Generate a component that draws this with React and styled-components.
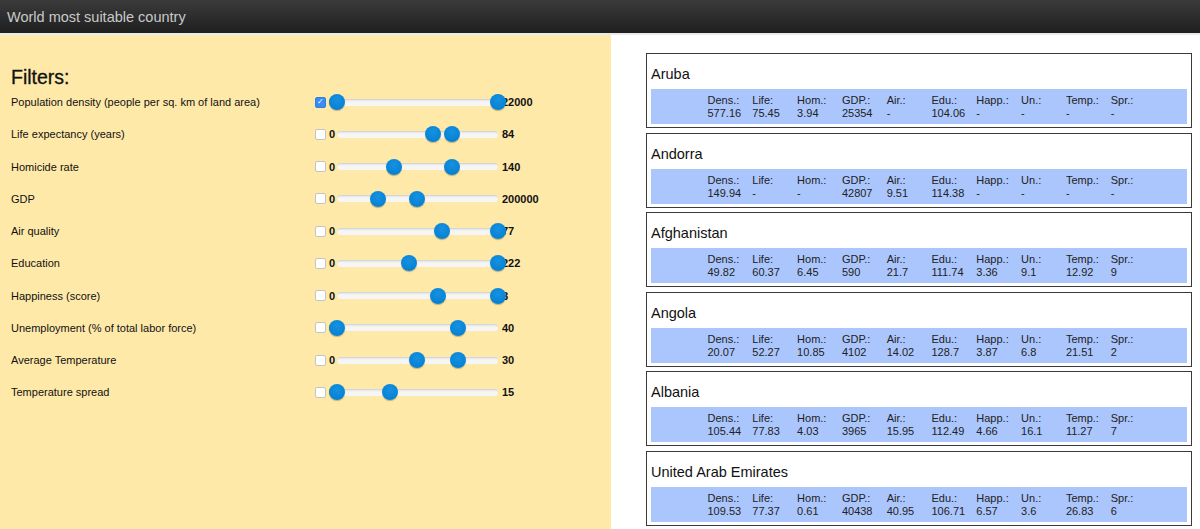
import React from 'react';
import styled, { createGlobalStyle } from 'styled-components';

const GlobalStyle = createGlobalStyle`
  html, body {
    margin: 0;
    padding: 0;
    background: #fff;
    font-family: "Liberation Sans", Arial, Helvetica, sans-serif;
    color: #111;
  }
`;

const Header = styled.header`
  height: 33px;
  display: flex;
  align-items: center;
  padding-left: 7px;
  background: linear-gradient(to bottom, #3b3b3b 0%, #1f1f1f 100%);
  border-bottom: 2px solid #e9e9e9;
  color: #c9c9c9;
  font-size: 14.5px;
`;

const Main = styled.main`
  display: flex;
  height: 494px;
  overflow: hidden;
`;

const FilterPanel = styled.section`
  width: 611px;
  flex-shrink: 0;
  background: #ffe9a9;
  padding: 32px 0 0 11px;
  box-sizing: border-box;
`;

const FilterTitle = styled.h2`
  margin: 0 0 -1px;
  font-size: 19.5px;
  font-weight: normal;
  line-height: 20px;
  -webkit-text-stroke: 0.3px #111;
`;

const FilterRow = styled.div`
  display: flex;
  align-items: center;
  height: 32.25px;
`;

const FilterLabel = styled.span`
  width: 304px;
  font-size: 11px;
  color: #111;
`;

const Check = styled.span`
  width: 9px;
  height: 9px;
  border-radius: 2px;
  border: 1px solid ${(p) => (p.checked ? '#2f7fe6' : '#c4c4c4')};
  background: ${(p) => (p.checked ? '#3b8cf2' : '#fff')};
  display: flex;
  align-items: center;
  justify-content: center;
  color: #fff;
  font-size: 8px;
  line-height: 1;
`;

const Bound = styled.span`
  font-size: 11px;
  font-weight: bold;
  color: #111;
  margin-left: ${(p) => (p.max ? '4px' : '3px')};
  width: ${(p) => (p.max ? 'auto' : '7px')};
`;

const Track = styled.div`
  position: relative;
  width: 161px;
  height: 7px;
  margin-left: 1px;
  border-radius: 4px;
  background: linear-gradient(to bottom, #e4e4e4 0%, #f5f5f5 45%, #f7f7f7 100%);
  box-shadow: inset 0 1px 1px rgba(0, 0, 0, 0.08);
`;

const Thumb = styled.span`
  position: absolute;
  top: 50%;
  width: 16px;
  height: 16px;
  margin: -8px 0 0 -8px;
  border-radius: 50%;
  background: radial-gradient(circle at 50% 35%, #1592e4 0%, #0a84d4 60%, #0776c2 100%);
  box-shadow: 0 1px 1px rgba(0, 0, 0, 0.25);
  z-index: 2;
`;

const ResultPanel = styled.section`
  flex: 1;
  padding: 18px 8px 0 35px;
  display: flex;
  flex-direction: column;
  gap: 4.5px;
`;

const Card = styled.article`
  height: 75px;
  flex-shrink: 0;
  border: 1px solid #3a3a3a;
  box-sizing: border-box;
  padding: 0 4px 3px;
  display: flex;
  flex-direction: column;
  justify-content: flex-end;
  background: #fff;
`;

const CountryName = styled.h3`
  margin: 0 0 6px;
  font-size: 14.5px;
  font-weight: normal;
  line-height: 17px;
  color: #111;
`;

const Stats = styled.div`
  height: 35px;
  box-sizing: border-box;
  background: #abc6fd;
  padding: 5px 0 0 56.5px;
  display: grid;
  grid-template-columns: repeat(10, 44.8px);
  grid-auto-rows: 13px;
  font-size: 11px;
  color: #222;
  line-height: 13px;
`;

const filters = [
  { label: 'Population density (people per sq. km of land area)', max: '22000', lo: 0, hi: 1, checked: true },
  { label: 'Life expectancy (years)', max: '84', lo: 0.596, hi: 0.714 },
  { label: 'Homicide rate', max: '140', lo: 0.354, hi: 0.714 },
  { label: 'GDP', max: '200000', lo: 0.255, hi: 0.497 },
  { label: 'Air quality', max: '77', lo: 0.652, hi: 1 },
  { label: 'Education', max: '222', lo: 0.447, hi: 1 },
  { label: 'Happiness (score)', max: '8', lo: 0.627, hi: 1 },
  { label: 'Unemployment (% of total labor force)', max: '40', lo: 0, hi: 0.752 },
  { label: 'Average Temperature', max: '30', lo: 0.497, hi: 0.752 },
  { label: 'Temperature spread', max: '15', lo: 0, hi: 0.329 },
];

const heads = ['Dens.:', 'Life:', 'Hom.:', 'GDP.:', 'Air.:', 'Edu.:', 'Happ.:', 'Un.:', 'Temp.:', 'Spr.:'];

const countries = [
  { name: 'Aruba', values: ['577.16', '75.45', '3.94', '25354', '-', '104.06', '-', '-', '-', '-'] },
  { name: 'Andorra', values: ['149.94', '-', '-', '42807', '9.51', '114.38', '-', '-', '-', '-'] },
  { name: 'Afghanistan', values: ['49.82', '60.37', '6.45', '590', '21.7', '111.74', '3.36', '9.1', '12.92', '9'] },
  { name: 'Angola', values: ['20.07', '52.27', '10.85', '4102', '14.02', '128.7', '3.87', '6.8', '21.51', '2'] },
  { name: 'Albania', values: ['105.44', '77.83', '4.03', '3965', '15.95', '112.49', '4.66', '16.1', '11.27', '7'] },
  { name: 'United Arab Emirates', values: ['109.53', '77.37', '0.61', '40438', '40.95', '106.71', '6.57', '3.6', '26.83', '6'] },
];

const App = function App() {
  return (
    <>
      <GlobalStyle />
      <Header>World most suitable country</Header>
      <Main>
        <FilterPanel>
          <FilterTitle>Filters:</FilterTitle>
          {filters.map((f) => (
            <FilterRow key={f.label}>
              <FilterLabel>{f.label}</FilterLabel>
              <Check checked={f.checked}>{f.checked ? '✓' : ''}</Check>
              <Bound>0</Bound>
              <Track>
                <Thumb style={{ left: `${f.lo * 100}%` }} />
                <Thumb style={{ left: `${f.hi * 100}%` }} />
              </Track>
              <Bound max>{f.max}</Bound>
            </FilterRow>
          ))}
        </FilterPanel>
        <ResultPanel>
          {countries.map((c) => (
            <Card key={c.name}>
              <CountryName>{c.name}</CountryName>
              <Stats>
                {heads.map((h) => (
                  <span key={h}>{h}</span>
                ))}
                {c.values.map((v, i) => (
                  <span key={heads[i]}>{v}</span>
                ))}
              </Stats>
            </Card>
          ))}
        </ResultPanel>
      </Main>
    </>
  );
};

export default App;
